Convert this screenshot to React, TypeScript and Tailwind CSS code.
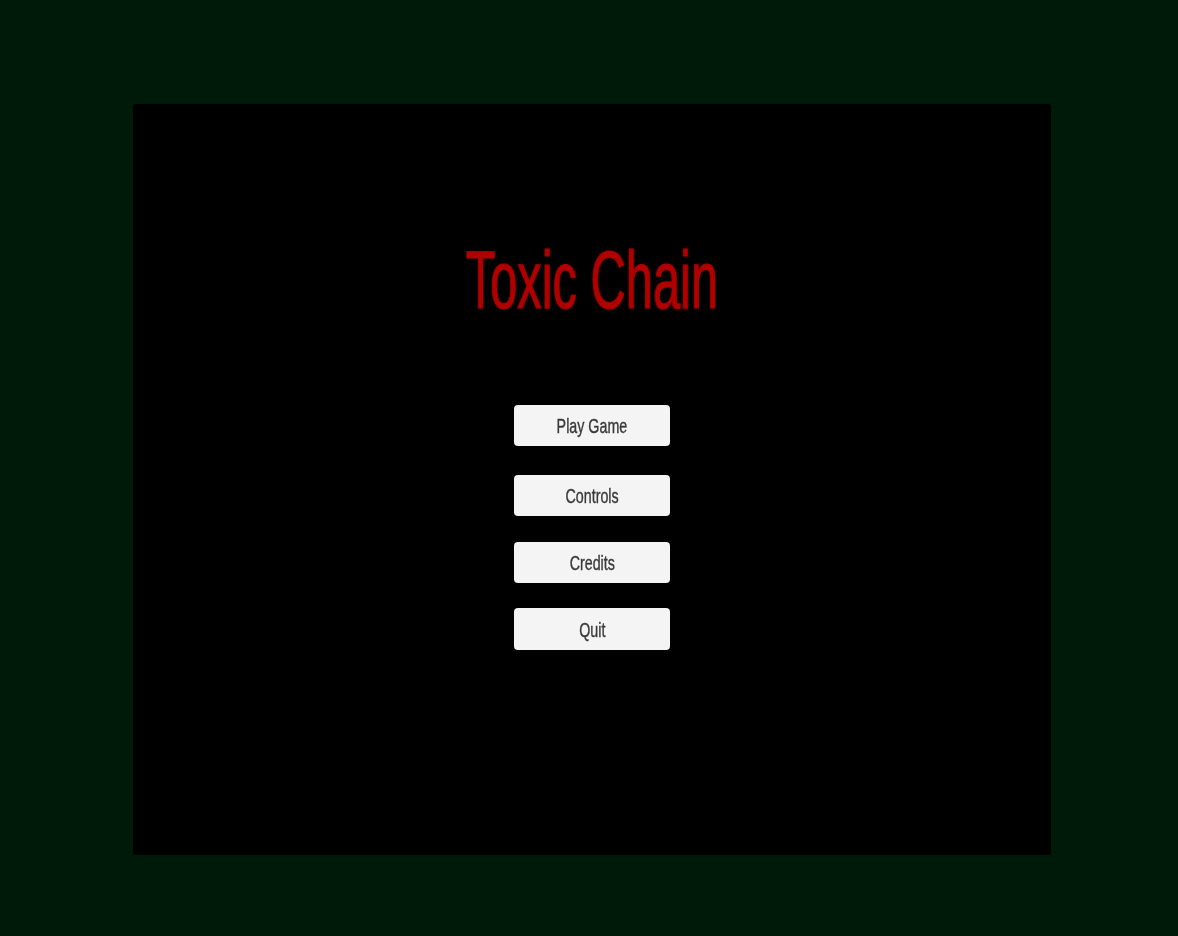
import React from "react";

const menuItems = [
  { label: "Play Game", mt: "mt-[83px]", h: "h-[41px]" },
  { label: "Controls", mt: "mt-[29px]", h: "h-[41px]" },
  { label: "Credits", mt: "mt-[26px]", h: "h-[41px]" },
  { label: "Quit", mt: "mt-[25px]", h: "h-[42px]" },
];

export default function App() {
  return (
    <div className="w-[1178px] h-[936px] bg-[#001a09] pt-[104px] pl-[133px]">
      <div
        className="w-[918px] h-[751px] bg-black rounded-[3px] flex flex-col items-center"
        style={{ fontFamily: '"Liberation Sans", Arial, sans-serif' }}
      >
        <div className="mt-[135px] h-[83px] leading-none text-[82px] text-[#b00000] whitespace-nowrap [-webkit-text-stroke:1px_#a80000] [text-shadow:0_0_3px_rgba(200,0,0,0.6)] blur-[0.5px]">
          <span className="inline-block scale-x-[0.595]">Toxic Chain</span>
        </div>
        {menuItems.map((item) => (
          <button
            key={item.label}
            className={`${item.mt} ${item.h} w-[156px] rounded-[4px] bg-[#f4f4f4] flex items-center justify-center text-[#3a3a3a] text-[21px] leading-none`}
          >
            <span className="inline-block scale-x-[0.68] whitespace-nowrap [-webkit-text-stroke:0.4px_#3a3a3a]">
              {item.label}
            </span>
          </button>
        ))}
      </div>
    </div>
  );
}
